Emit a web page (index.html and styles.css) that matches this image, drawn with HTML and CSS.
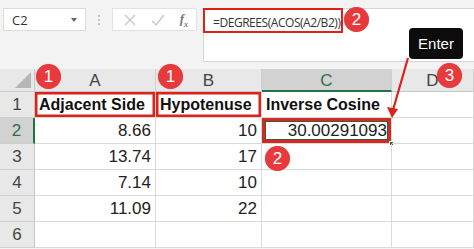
FILE: index.html
```html
<!DOCTYPE html>
<html>
<head>
<meta charset="utf-8">
<link rel="stylesheet" href="styles.css">
</head>
<body>
<div class="app">
  <div class="toolbar">
    <div class="namebox"><span>C2</span><span class="caret"></span></div>
    <div class="dots"><i></i><i></i><i></i></div>
    <div class="fxbox">
      <svg class="ic" width="14" height="14" viewBox="0 0 14 14"><path d="M2 2 L12 12 M12 2 L2 12" stroke="#c8c8c8" stroke-width="1.4" fill="none"/></svg>
      <svg class="ic" width="16" height="14" viewBox="0 0 16 14"><path d="M2 8 L6 12 L14 2" stroke="#c8c8c8" stroke-width="1.4" fill="none"/></svg>
      <span class="fx">f<sub>x</sub></span>
    </div>
    <div class="formula">
      <span class="ftext">=DEGREES(ACOS(A2/B2))</span>
    </div>
  </div>
  <div class="sheet">
    <div class="corner"><span class="tri"></span></div>
    <div class="ch">A</div>
    <div class="ch">B</div>
    <div class="ch sel">C</div>
    <div class="ch">D</div>

    <div class="rh">1</div>
    <div class="c b hl">Adjacent Side</div>
    <div class="c b hl">Hypotenuse</div>
    <div class="c b">Inverse Cosine</div>
    <div class="c"></div>

    <div class="rh sel">2</div>
    <div class="c n">8.66</div>
    <div class="c n">10</div>
    <div class="c n active">30.00291093<span class="handle"></span></div>
    <div class="c"></div>

    <div class="rh">3</div>
    <div class="c n">13.74</div>
    <div class="c n">17</div>
    <div class="c"></div>
    <div class="c"></div>

    <div class="rh">4</div>
    <div class="c n">7.14</div>
    <div class="c n">10</div>
    <div class="c"></div>
    <div class="c"></div>

    <div class="rh">5</div>
    <div class="c n">11.09</div>
    <div class="c n">22</div>
    <div class="c"></div>
    <div class="c"></div>

    <div class="rh">6</div>
    <div class="c"></div>
    <div class="c"></div>
    <div class="c"></div>
    <div class="c"></div>
  </div>

  <div class="badge b1a">1</div>
  <div class="badge b1b">1</div>
  <div class="badge b2a">2</div>
  <div class="badge b2b">2</div>
  <div class="badge b3">3</div>
  <div class="tip">Enter</div>
  <svg class="arrow" width="40" height="70" viewBox="0 0 40 70">
    <path d="M26 2 L11 54" stroke="#e0201b" stroke-width="2.2" fill="none"/>
    <path d="M5 51 L10 62 L16 53 Z" fill="#e0201b"/>
  </svg>
</div>
</body>
</html>
```

FILE: styles.css
```css
* { box-sizing: border-box; }
html, body { margin: 0; padding: 0; }
body {
  width: 474px;
  height: 249px;
  overflow: hidden;
  background: #f3f3f3;
  font-family: "Liberation Sans", Arial, sans-serif;
}
.app { position: relative; width: 474px; height: 249px; }

.toolbar {
  display: flex;
  align-items: flex-start;
  height: 69px;
  padding-top: 8px;
  background: #f3f3f3;
}
.namebox {
  margin-left: 3px;
  width: 83px;
  height: 23px;
  background: #fff;
  border: 1px solid #dcdcdc;
  display: flex;
  align-items: center;
  justify-content: space-between;
  padding: 0 8px 0 8px;
  font-size: 13px;
  color: #333;
  font-family: "Open Sans", sans-serif;
}
.caret {
  width: 0; height: 0;
  border-left: 3.5px solid transparent;
  border-right: 3.5px solid transparent;
  border-top: 4px solid #666;
}
.dots {
  width: 26px;
  height: 23px;
  display: flex;
  flex-direction: column;
  align-items: center;
  justify-content: center;
  gap: 2px;
}
.dots i { width: 2px; height: 2px; background: #c4c4c4; display: block; }
.fxbox {
  width: 85px;
  height: 23px;
  background: #fff;
  border: 1px solid #e2e2e2;
  display: flex;
  align-items: center;
  justify-content: space-between;
  padding: 0 8px 0 10px;
}
.fx {
  font-family: "Liberation Serif", serif;
  font-style: italic;
  font-size: 13px;
  color: #777;
  font-weight: bold;
}
.fx sub { font-size: 8px; }
.formula {
  margin-left: 6px;
  flex: 1;
  height: 54px;
  background: #fff;
  border: 1px solid #d6d6d6;
  border-right: 0;
}
.ftext {
  display: inline-block;
  width: 140px;
  height: 25px;
  margin: -1px 0 0 -1px;
  padding: 4px 0 0 8px;
  border: 2.5px solid #e0201b;
  font-family: "Open Sans", sans-serif;
  font-size: 12px;
  color: #333;
  letter-spacing: -0.45px;
  white-space: nowrap;
}

.sheet {
  display: grid;
  grid-template-columns: 35px 121px 106px 130px 1fr;
  grid-template-rows: 23px repeat(6, 26px);
  background: #fff;
}
.corner, .ch, .rh {
  background: #e8e8e8;
  color: #444;
  font-family: "Liberation Sans", sans-serif;
  font-size: 17px;
  display: flex;
  align-items: center;
  justify-content: center;
}
.corner {
  position: relative;
  border-right: 1px solid #c9c9c9;
  border-bottom: 1px solid #c9c9c9;
}
.tri {
  position: absolute;
  right: 3px;
  bottom: 3px;
  width: 0; height: 0;
  border-left: 16px solid transparent;
  border-bottom: 16px solid #b6b6b6;
}
.ch {
  border-right: 1px solid #d0d0d0;
  border-bottom: 1px solid #c6c6c6;
  padding-top: 2px;
}
.ch.sel {
  background: #d2d2d2;
  color: #2f6e4a;
  border-bottom: 2px solid #217346;
}
.rh {
  border-right: 1px solid #c6c6c6;
  border-bottom: 1px solid #d0d0d0;
}
.rh.sel {
  background: #d2d2d2;
  color: #2f6e4a;
  border-right: 2px solid #217346;
}
.c {
  border-right: 1px solid #dadada;
  border-bottom: 1px solid #dadada;
  font-size: 17px;
  color: #222;
  display: flex;
  align-items: center;
  padding: 0 4px;
  white-space: nowrap;
  position: relative;
}
.c.b { font-weight: bold; font-size: 16px; color: #111; }
.c.n { justify-content: flex-end; }
.hl { box-shadow: inset 0 0 0 2.5px #e0201b; }
.active {
  box-shadow: inset 0 0 0 3px #d42a20, inset 0 0 0 4px #3c5a43;
}
.handle {
  position: absolute;
  right: -3px;
  bottom: -3px;
  width: 5px;
  height: 5px;
  background: #217346;
  border: 1px solid #fff;
}

.badge {
  position: absolute;
  width: 25px;
  height: 25px;
  border-radius: 50%;
  background: #e8393c;
  color: #fff;
  font-family: "Liberation Sans", sans-serif;
  font-size: 17px;
  display: flex;
  align-items: center;
  justify-content: center;
  box-shadow: 0 0 1px rgba(0,0,0,0.3);
}
.b1a { left: 36px; top: 64px; }
.b1b { left: 158px; top: 64px; }
.b2a { left: 344px; top: 7px; }
.b2b { left: 265px; top: 146px; }
.b3 { left: 437px; top: 63px; }

.tip {
  position: absolute;
  left: 409px;
  top: 28px;
  width: 54px;
  height: 31px;
  background: #0c0c0c;
  border-radius: 4px;
  color: #fff;
  font-family: "Liberation Sans", sans-serif;
  font-size: 15px;
  display: flex;
  align-items: center;
  justify-content: center;
}
.arrow {
  position: absolute;
  left: 382px;
  top: 56px;
}
```
